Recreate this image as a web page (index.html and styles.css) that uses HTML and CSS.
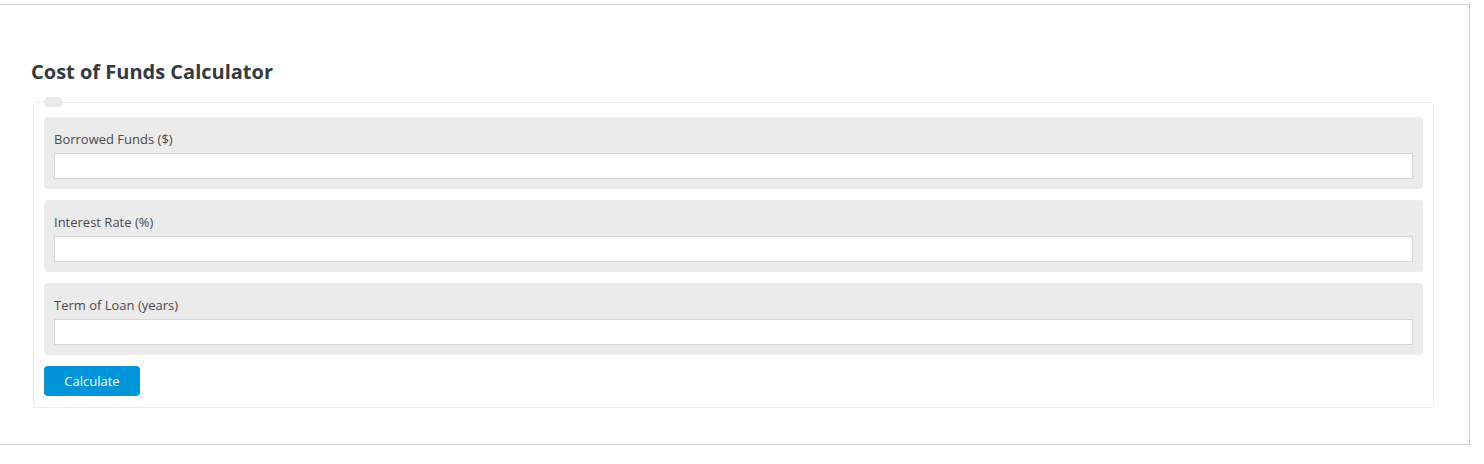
FILE: index.html
```html
<!DOCTYPE html>
<html lang="en">
<head>
    <meta charset="UTF-8">
    <meta name="viewport" content="width=device-width, initial-scale=1.0">
    <title>Cost of Funds Calculator</title>
    <link rel="stylesheet" href="styles.css">
</head>
<body>
    <div class="page">
        <h2 class="title">Cost of Funds Calculator</h2>
        <form class="calc" onsubmit="return false;">
            <fieldset class="calc-box">
                <legend class="calc-legend"></legend>

                <div class="field">
                    <label for="borrowed">Borrowed Funds ($)</label>
                    <input type="text" id="borrowed" name="borrowed">
                </div>

                <div class="field">
                    <label for="rate">Interest Rate (%)</label>
                    <input type="text" id="rate" name="rate">
                </div>

                <div class="field">
                    <label for="term">Term of Loan (years)</label>
                    <input type="text" id="term" name="term">
                </div>

                <button class="calc-button" type="submit">Calculate</button>
            </fieldset>
        </form>
    </div>
</body>
</html>
```

FILE: styles.css
```css
body {
    margin: 0;
    padding: 0;
    font-family: "Open Sans", "Noto Sans", Arial, sans-serif;
    background-color: white;
    color: #444;
}

.page {
    box-sizing: border-box;
    width: 1470px;
    height: 441px;
    margin-top: 4px;
    border: 1px solid #cfcfd2;
    border-left: none;
    padding: 53px 0 0 31px;
}

.title {
    margin: 0 0 11px;
    font-size: 20px;
    line-height: 28px;
    font-weight: 700;
    color: #333a40;
}

.calc {
    margin: 0 0 0 2px;
}

.calc-box {
    width: 1401px;
    box-sizing: border-box;
    margin: 0;
    padding: 10px 10px 11px;
    border: 1px solid #ececec;
    border-radius: 4px;
    display: flex;
    flex-direction: column;
    gap: 11px;
}

.calc-legend {
    width: 19px;
    height: 10px;
    padding: 0;
    background-color: #e8e9e8;
    border-radius: 5px;
}

.field {
    background-color: #eaebea;
    border-radius: 4px;
    padding: 12px 10px 10px;
}

.field label {
    display: block;
    font-size: 13px;
    line-height: 20px;
    color: #4a4a4a;
    margin-bottom: 4px;
}

.field input {
    display: block;
    width: 100%;
    height: 26px;
    box-sizing: border-box;
    border: 1px solid #d6d6d6;
    background-color: white;
    font-size: 13px;
    padding: 0 6px;
    margin: 0;
}

.calc-button {
    align-self: flex-start;
    width: 96px;
    height: 30px;
    border: none;
    border-radius: 4px;
    background-color: #0095da;
    color: white;
    font-family: inherit;
    font-size: 13px;
    cursor: pointer;
}

.calc-button:hover {
    background-color: #0086c4;
}
```
